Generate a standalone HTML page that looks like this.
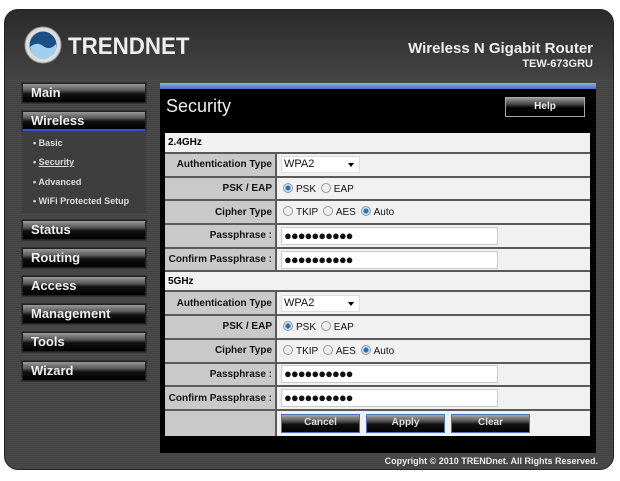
<!DOCTYPE html>
<html><head><style>
*{margin:0;padding:0;box-sizing:border-box}
body{width:620px;height:481px;background:#fff;font-family:"Liberation Sans",sans-serif;position:relative;overflow:hidden}
.frame{position:absolute;left:4px;top:9px;width:610px;height:461px;border-radius:14px;background:repeating-linear-gradient(#4a4a4a 0 1px,#434343 1px 2px);border:1px solid #222}
.hdr{position:absolute;left:0;top:0;width:100%;height:70px;border-radius:13px 13px 0 0;background:linear-gradient(#2a2a2a,#3a3a3a 60%,#444)}
.abs{position:absolute}
.btn{position:absolute;left:22px;width:124px;height:20px;background:linear-gradient(#9a9a9a,#5a5a5a 35%,#111 55%,#000);border:1px solid #222;box-shadow:0 0 0 1px #333;color:#eee;font-weight:bold;font-size:13px;padding-left:8px;line-height:17px}
.sub{position:absolute;left:22px;top:131px;width:124px;height:82px;background:#3e3e3e;color:#ddd;font-size:9px;font-weight:bold}
.sub div{position:absolute;left:11px}
table{position:absolute;left:165px;top:133px;width:425px;border-collapse:collapse;background:#fff;font-size:10px}
td{border-bottom:2px solid #5a5a5a;height:23.7px}
td.l{width:111px;background:#c9c9c9;text-align:right;font-weight:bold;padding-right:3px;border-right:2px solid #5a5a5a;color:#111}
td.v{background:#f1f1f1;padding-left:4px;color:#111}
td.h{background:#f1f1f1;font-weight:bold;padding-left:3px;height:20px}
.in{display:inline-block;width:217px;height:18px;background:#fff;border:1px solid #ccc;font-size:13px;letter-spacing:-1px;line-height:15px;padding-left:2px;vertical-align:middle}
.sel{display:inline-block;width:79px;height:17px;background:#fff;border:1px solid #ddd;font-size:11px;line-height:15px;padding-left:2px;position:relative;vertical-align:middle}
.sel:after{content:"";position:absolute;right:5px;top:6px;border:3px solid transparent;border-top:4px solid #000}
.r{display:inline-block;width:10px;height:10px;border:1px solid #999;border-radius:50%;background:#eee;vertical-align:-1px;margin:0 3px 0 2px}
.r.on{background:radial-gradient(#2a6fb0 0 2px,#cfe0f0 3px)}
.b2{display:inline-block;width:79px;height:19px;background:linear-gradient(#aaa,#555 35%,#111 55%,#000);border:1px solid #4a6fc0;color:#ddd;font-weight:bold;font-size:10px;text-align:center;line-height:16px;margin-right:6px;vertical-align:middle}
</style></head><body>
<div class="frame"><div class="hdr"></div></div>
<svg class="abs" style="left:23px;top:25px" width="40" height="40" viewBox="0 0 40 40"><circle cx="20" cy="20" r="18" fill="#ddd" stroke="#999" stroke-width="1"/><circle cx="20" cy="20" r="13.5" fill="#1d4f86"/><path d="M7 22 Q14 16 20 21 Q27 26 33 19 L33 24 Q30 33 20 33.5 Q9 33 7 22Z" fill="#9fd0ee"/></svg>
<div class="abs" style="left:68px;top:33px;color:#eee;font-size:24px;font-weight:bold;transform:scaleX(0.93);transform-origin:left">TRENDNET</div>
<div class="abs" style="right:27px;top:40px;color:#eee;font-size:15px;font-weight:bold">Wireless N Gigabit Router</div>
<div class="abs" style="right:27px;top:58px;color:#eee;font-size:11px;font-weight:bold">TEW-673GRU</div>
<div class="btn" style="top:83px">Main</div>
<div class="btn" style="top:111px;border-bottom:2px solid #2a56c8">Wireless</div>
<div class="sub"><div style="top:7px">• Basic</div><div style="top:26px">• <u>Security</u></div><div style="top:46px">• Advanced</div><div style="top:65px">• WiFi Protected Setup</div></div>
<div class="btn" style="top:220px">Status</div>
<div class="btn" style="top:248px">Routing</div>
<div class="btn" style="top:276px">Access</div>
<div class="btn" style="top:304px">Management</div>
<div class="btn" style="top:332px">Tools</div>
<div class="btn" style="top:361px">Wizard</div>
<div class="abs" style="left:160px;top:83px;width:436px;height:370px;background:#000"></div>
<div class="abs" style="left:160px;top:83px;width:436px;height:6px;background:linear-gradient(#8fb0e8,#4a6fc0)"></div>
<div class="abs" style="left:166px;top:96px;color:#eee;font-size:18px">Security</div>
<div class="abs" style="left:505px;top:97px;width:80px;height:20px;background:linear-gradient(#999,#444 35%,#000 55%);border:1px solid #aaa;color:#eee;font-weight:bold;font-size:10px;text-align:center;line-height:18px">Help</div>
<table>
<tr><td class="h" colspan="2">2.4GHz</td></tr>
<tr><td class="l">Authentication Type</td><td class="v"><span class="sel">WPA2</span></td></tr>
<tr><td class="l">PSK / EAP</td><td class="v"><span class="r on"></span>PSK <span class="r"></span>EAP</td></tr>
<tr><td class="l">Cipher Type</td><td class="v"><span class="r"></span>TKIP <span class="r"></span>AES <span class="r on"></span>Auto</td></tr>
<tr><td class="l">Passphrase :</td><td class="v"><span class="in">●●●●●●●●●●</span></td></tr>
<tr><td class="l">Confirm Passphrase :</td><td class="v"><span class="in">●●●●●●●●●●</span></td></tr>
<tr><td class="h" colspan="2">5GHz</td></tr>
<tr><td class="l">Authentication Type</td><td class="v"><span class="sel">WPA2</span></td></tr>
<tr><td class="l">PSK / EAP</td><td class="v"><span class="r on"></span>PSK <span class="r"></span>EAP</td></tr>
<tr><td class="l">Cipher Type</td><td class="v"><span class="r"></span>TKIP <span class="r"></span>AES <span class="r on"></span>Auto</td></tr>
<tr><td class="l">Passphrase :</td><td class="v"><span class="in">●●●●●●●●●●</span></td></tr>
<tr><td class="l">Confirm Passphrase :</td><td class="v"><span class="in">●●●●●●●●●●</span></td></tr>
<tr><td class="l" style="border-bottom:none;height:26px"></td><td class="v" style="border-bottom:none"><span class="b2">Cancel</span><span class="b2">Apply</span><span class="b2">Clear</span></td></tr>
</table>
<div class="abs" style="right:22px;top:456px;color:#eee;font-size:9px;font-weight:bold">Copyright © 2010 TRENDnet. All Rights Reserved.</div>
</body></html>
